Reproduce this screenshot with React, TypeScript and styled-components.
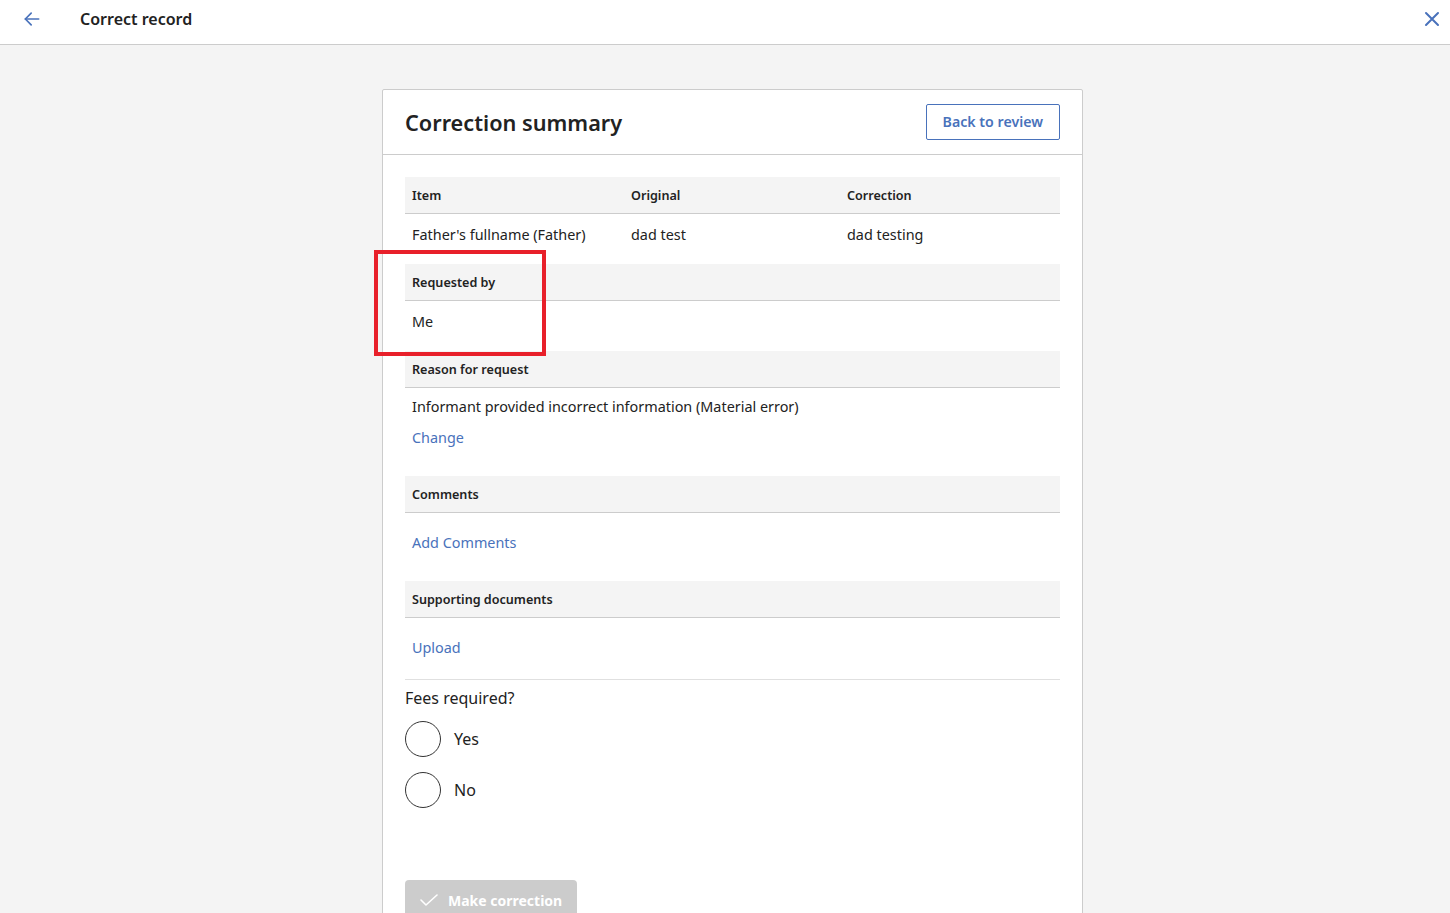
import React from "react";
import styled, { createGlobalStyle } from "styled-components";

const GlobalStyle = createGlobalStyle`
  html, body {
    margin: 0;
    padding: 0;
    background: #f4f4f4;
    font-family: "Noto Sans", "Open Sans", sans-serif;
    color: #222222;
  }
  * { box-sizing: border-box; }
`;

const blue = "#4972bb";

const Page = styled.div`
  min-height: 913px;
  background: #f4f4f4;
`;

const TopBar = styled.header`
  height: 45px;
  background: #ffffff;
  border-bottom: 1px solid #cccccc;
  display: flex;
  align-items: center;
  padding: 0 6px 6px 20px;
`;

const IconButton = styled.button`
  border: 0;
  background: transparent;
  padding: 0;
  width: 24px;
  height: 24px;
  display: flex;
  align-items: center;
  justify-content: center;
  color: ${blue};
  cursor: pointer;
`;

const TopTitle = styled.h1`
  margin: 0 0 0 36px;
  font-size: 16px;
  font-weight: 600;
  flex: 1;
`;

const Main = styled.main`
  display: flex;
  justify-content: center;
  padding-top: 44px;
`;

const Card = styled.section`
  position: relative;
  width: 701px;
  background: #ffffff;
  border: 1px solid #cccccc;
  border-radius: 2px;
  margin-left: 15px;
`;

const CardHeader = styled.div`
  height: 65px;
  border-bottom: 1px solid #cccccc;
  display: flex;
  align-items: center;
  justify-content: space-between;
  padding: 0 22px;
`;

const CardTitle = styled.h2`
  margin: 0;
  font-size: 21.7px;
  font-weight: 600;
`;

const OutlineButton = styled.button`
  height: 36px;
  padding: 0 16px;
  border: 1px solid ${blue};
  border-radius: 2px;
  background: #ffffff;
  color: ${blue};
  font-family: inherit;
  font-size: 14.2px;
  font-weight: 600;
  margin-top: -1px;
`;

const CardBody = styled.div`
  padding: 22px 22px 0;
`;

const Table = styled.div`
  display: grid;
  grid-template-columns: 219px 216px 1fr;
`;

const HeadCell = styled.div`
  height: 37px;
  background: #f4f4f4;
  border-bottom: 1px solid #cccccc;
  display: flex;
  align-items: center;
  padding: 0 7px;
  font-size: 12.6px;
  font-weight: 600;
`;

const Cell = styled.div`
  height: 50px;
  padding: 11px 7px 0;
  font-size: 14.4px;
  line-height: 20px;
`;

const Section = styled.div<{ $divider?: boolean }>`
  border-bottom: ${(p) => (p.$divider ? "1px solid #e0e0e0" : "0")};
`;

const SectionBody = styled.div<{ $pad: string }>`
  padding: ${(p) => p.$pad};
  display: flex;
  flex-direction: column;
  gap: 12px;
`;

const Text = styled.div`
  font-size: 14.4px;
  line-height: 19px;
`;

const LinkText = styled.a`
  color: ${blue};
  font-size: 14.4px;
  line-height: 19px;
  text-decoration: none;
  cursor: pointer;
`;

const Fees = styled.div`
  padding-top: 7px;
`;

const Legend = styled.div`
  font-size: 16px;
  line-height: 22px;
`;

const RadioRow = styled.label`
  display: flex;
  align-items: center;
  gap: 13px;
  margin-top: 12px;
  font-size: 16px;
  cursor: pointer;

  & + & {
    margin-top: 15px;
  }
`;

const RadioCircle = styled.span`
  width: 36px;
  height: 36px;
  border: 1.5px solid #333333;
  border-radius: 50%;
`;

const Footer = styled.div`
  padding: 72px 0 24px;
`;

const PrimaryButton = styled.button`
  height: 40px;
  padding: 0 15px;
  border: 0;
  border-radius: 4px;
  background: #cccccc;
  color: #ffffff;
  font-family: inherit;
  font-size: 14px;
  font-weight: 700;
  display: flex;
  align-items: center;
  gap: 10px;
`;

const Highlight = styled.div`
  position: absolute;
  left: -9px;
  top: 160px;
  width: 172px;
  height: 106px;
  border: 4px solid #e8202a;
  pointer-events: none;
`;

const ArrowLeft = () => (
  <svg width="20" height="20" viewBox="0 0 24 24" fill="none" stroke="currentColor" strokeWidth="2" strokeLinecap="round" strokeLinejoin="round">
    <path d="M20 12H4" />
    <path d="M11 5l-7 7 7 7" />
  </svg>
);

const CloseIcon = () => (
  <svg width="16" height="16" viewBox="0 0 16 16" fill="none" stroke="currentColor" strokeWidth="2" strokeLinecap="round">
    <path d="M2 2l12 12M14 2L2 14" />
  </svg>
);

const CheckIcon = () => (
  <svg width="18" height="14" viewBox="0 0 18 14" fill="none" stroke="currentColor" strokeWidth="1.6" strokeLinecap="round" strokeLinejoin="round">
    <path d="M1 7l5 5L17 2" />
  </svg>
);

export default function App() {
  return (
    <Page>
      <GlobalStyle />
      <TopBar>
        <IconButton aria-label="Back">
          <ArrowLeft />
        </IconButton>
        <TopTitle>Correct record</TopTitle>
        <IconButton aria-label="Close">
          <CloseIcon />
        </IconButton>
      </TopBar>
      <Main>
        <Card>
          <CardHeader>
            <CardTitle>Correction summary</CardTitle>
            <OutlineButton>Back to review</OutlineButton>
          </CardHeader>
          <CardBody>
            <Table>
              <HeadCell>Item</HeadCell>
              <HeadCell>Original</HeadCell>
              <HeadCell>Correction</HeadCell>
              <Cell>Father's fullname (Father)</Cell>
              <Cell>dad test</Cell>
              <Cell>dad testing</Cell>
            </Table>
            <Section>
              <HeadCell>Requested by</HeadCell>
              <Cell>Me</Cell>
            </Section>
            <Section>
              <HeadCell>Reason for request</HeadCell>
              <SectionBody $pad="9px 7px 29px">
                <Text>Informant provided incorrect information (Material error)</Text>
                <LinkText>Change</LinkText>
              </SectionBody>
            </Section>
            <Section>
              <HeadCell>Comments</HeadCell>
              <SectionBody $pad="20px 7px 29px">
                <LinkText>Add Comments</LinkText>
              </SectionBody>
            </Section>
            <Section $divider>
              <HeadCell>Supporting documents</HeadCell>
              <SectionBody $pad="20px 7px 22px">
                <LinkText>Upload</LinkText>
              </SectionBody>
            </Section>
            <Fees role="radiogroup">
              <Legend>Fees required?</Legend>
              <RadioRow>
                <RadioCircle />
                Yes
              </RadioRow>
              <RadioRow>
                <RadioCircle />
                No
              </RadioRow>
            </Fees>
            <Footer>
              <PrimaryButton disabled>
                <CheckIcon />
                Make correction
              </PrimaryButton>
            </Footer>
          </CardBody>
          <Highlight />
        </Card>
      </Main>
    </Page>
  );
}
